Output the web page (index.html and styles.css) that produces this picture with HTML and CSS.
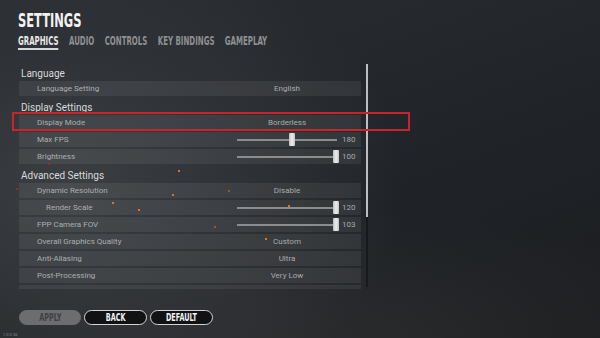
FILE: index.html
```html
<!DOCTYPE html>
<html>
<head>
<meta charset="utf-8">
<link rel="stylesheet" href="styles.css">
</head>
<body>
<div class="screen">
  <header class="head">
    <h1 class="title">SETTINGS</h1>
    <nav class="tabs">
      <span class="tab active">GRAPHICS</span>
      <span class="tab">AUDIO</span>
      <span class="tab">CONTROLS</span>
      <span class="tab">KEY BINDINGS</span>
      <span class="tab">GAMEPLAY</span>
    </nav>
  </header>

  <div class="panel">
    <div class="list">
      <div class="section">Language</div>
      <div class="row"><span class="label">Language Setting</span><span class="value">English</span></div>

      <div class="section">Display Settings</div>
      <div class="row"><span class="label">Display Mode</span><span class="value">Borderless</span></div>
      <div class="row"><span class="label">Max FPS</span><span class="slider"><span class="track"></span><span class="knob" style="left:55%"></span></span><span class="num">180</span></div>
      <div class="row"><span class="label">Brightness</span><span class="slider"><span class="track"></span><span class="knob" style="left:99%"></span></span><span class="num">100</span></div>

      <div class="section">Advanced Settings</div>
      <div class="row"><span class="label">Dynamic Resolution</span><span class="value">Disable</span></div>
      <div class="row"><span class="label sub">Render Scale</span><span class="slider"><span class="track"></span><span class="knob" style="left:99%"></span></span><span class="num">120</span></div>
      <div class="row"><span class="label">FPP Camera FOV</span><span class="slider"><span class="track"></span><span class="knob" style="left:99%"></span></span><span class="num">103</span></div>
      <div class="row"><span class="label">Overall Graphics Quality</span><span class="value">Custom</span></div>
      <div class="row"><span class="label">Anti-Aliasing</span><span class="value">Ultra</span></div>
      <div class="row"><span class="label">Post-Processing</span><span class="value">Very Low</span></div>
      <div class="row"><span class="label">Shadows</span><span class="value">Very Low</span></div>
    </div>
    <div class="scroll"><div class="scroll-thumb"></div></div>
  </div>

  <div class="buttons">
    <button class="btn btn-disabled"><span>APPLY</span></button>
    <button class="btn"><span>BACK</span></button>
    <button class="btn"><span>DEFAULT</span></button>
  </div>
  <div class="build">1.0.0.36</div>

  <div class="highlight"></div>

  <i class="spark" style="left:178px;top:170px"></i>
  <i class="spark" style="left:172px;top:194px"></i>
  <i class="spark" style="left:112px;top:202px"></i>
  <i class="spark" style="left:138px;top:209px"></i>
  <i class="spark dim" style="left:228px;top:190px"></i>
  <i class="spark" style="left:288px;top:205px"></i>
  <i class="spark dim" style="left:214px;top:226px"></i>
  <i class="spark" style="left:265px;top:238px"></i>
  <i class="spark red" style="left:16px;top:188px"></i>
  <i class="spark red" style="left:48px;top:163px"></i>
</div>
</body>
</html>
```

FILE: styles.css
```css
* { box-sizing: border-box; }

html, body {
  margin: 0;
  padding: 0;
  width: 600px;
  height: 338px;
  overflow: hidden;
  background: #232629;
}

.screen {
  position: relative;
  width: 600px;
  height: 338px;
  overflow: hidden;
  font-family: Roboto, "Liberation Sans", sans-serif;
  background:
    radial-gradient(ellipse 70% 45% at 50% 105%, rgba(60,60,60,0.45) 0%, rgba(40,40,40,0) 100%),
    radial-gradient(ellipse 55% 75% at 12% 55%, #3c3f42 0%, #303337 45%, rgba(30,33,37,0) 100%),
    linear-gradient(160deg, #2a2d31 0%, #23262a 40%, #1e2125 70%, #1c1d1f 100%);
}

/* header */
.head {
  padding: 11px 0 0 18px;
}

.title {
  margin: 0;
  font-family: "Liberation Sans Narrow", "DejaVu Sans Condensed", "Liberation Sans", sans-serif;
  font-weight: bold;
  font-size: 19px;
  line-height: 19px;
  color: #f2f2f2;
  transform: scaleX(0.67);
  transform-origin: 0 0;
}

.tabs {
  display: flex;
  gap: 16px;
  margin-top: 5px;
  width: 600px;
  font-family: "Liberation Sans Narrow", "DejaVu Sans Condensed", "Liberation Sans", sans-serif;
  font-weight: bold;
  font-size: 12px;
  line-height: 12px;
  transform: scaleX(0.65);
  transform-origin: 0 0;
}

.tab {
  color: #8e9093;
  padding-bottom: 1px;
  border-bottom: 2px solid transparent;
}

.tab.active {
  color: #e6e6e6;
  border-bottom-color: #d6d6d6;
}

/* panel */
.panel {
  display: flex;
  margin: 14px 0 0 19px;
  height: 225px;
}

.list {
  width: 342px;
  height: 225px;
  overflow: hidden;
}

.section {
  height: 17px;
  line-height: 17px;
  padding: 1px 0 0 2px;
  font-size: 10px;
  color: #d9dadb;
}

.row {
  display: grid;
  grid-template-columns: 218px 100px 1fr;
  align-items: center;
  height: 15px;
  margin-bottom: 2px;
  background: rgba(255,255,255,0.065);
  font-size: 8px;
  color: #acaeb1;
}

.label {
  padding-left: 18px;
  white-space: nowrap;
}

.label.sub { padding-left: 27px; }

.value {
  justify-self: center;
  white-space: nowrap;
  color: #a9abae;
}

.num {
  padding-left: 5px;
  color: #a9abae;
}

.slider {
  position: relative;
  height: 15px;
}

.track {
  position: absolute;
  left: 0;
  right: 0;
  top: 7px;
  height: 1.5px;
  background: #8a8c8f;
}

.knob {
  position: absolute;
  top: 1px;
  width: 6px;
  height: 13px;
  margin-left: -3px;
  border-radius: 1px;
  background: linear-gradient(90deg, #bfbfbf 0%, #ededed 50%, #c4c4c4 100%);
}

.scroll {
  margin-left: 5px;
  width: 2px;
  height: 223px;
  background: #17191b;
}

.scroll-thumb {
  height: 153px;
  background: #bdbebf;
}

/* buttons */
.buttons {
  display: flex;
  gap: 3px;
  margin: 21px 0 0 19px;
}

.btn {
  width: 63px;
  height: 15px;
  padding: 0;
  border: 1px solid #d4d4d4;
  border-radius: 8px;
  background: #111214;
  color: #f4f4f4;
  font-family: "Liberation Sans Narrow", "DejaVu Sans Condensed", "Liberation Sans", sans-serif;
  font-weight: bold;
  font-size: 10px;
  line-height: 13px;
  display: flex;
  justify-content: center;
  align-items: center;
}

.btn span {
  display: inline-block;
  transform: scaleX(0.72);
}

.btn-disabled {
  width: 62px;
  border-color: #6c6d6f;
  background: #6c6d6f;
  color: #3f4042;
}

.build {
  margin: 7px 0 0 3px;
  font-size: 4px;
  line-height: 5px;
  color: #8a8a8a;
}

/* overlays */
.highlight {
  position: absolute;
  left: 12px;
  top: 112px;
  width: 398px;
  height: 19px;
  border: 2px solid #c9232c;
}

.spark {
  position: absolute;
  width: 1.5px;
  height: 1.5px;
  background: #d2782e;
}

.spark.dim { background: #8a5a30; }
.spark.red { background: #9a2a2a; }
```
